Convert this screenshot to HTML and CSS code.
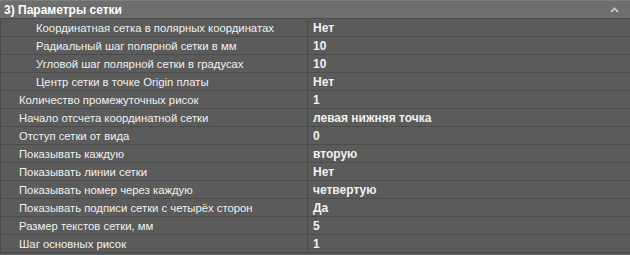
FILE: index.html
```html
<!DOCTYPE html>
<html lang="ru">
<head>
    <meta charset="UTF-8">
    <title>Параметры сетки</title>
    <link rel="stylesheet" href="styles.css">
</head>
<body>
    <div class="panel">
        <div class="group-header">
            <span class="group-title">3) Параметры сетки</span>
            <svg class="collapse" width="9" height="6" viewBox="0 0 9 6"><path d="M1 5 L4.5 1.5 L8 5" fill="none" stroke="#d0d0d0" stroke-width="1.6"/></svg>
        </div>
        <div class="row sub"><div class="name">Координатная сетка в полярных координатах</div><div class="value">Нет</div></div>
        <div class="row sub"><div class="name">Радиальный шаг полярной сетки в мм</div><div class="value">10</div></div>
        <div class="row sub"><div class="name">Угловой шаг полярной сетки в градусах</div><div class="value">10</div></div>
        <div class="row sub"><div class="name">Центр сетки в точке Origin платы</div><div class="value">Нет</div></div>
        <div class="row"><div class="name">Количество промежуточных рисок</div><div class="value">1</div></div>
        <div class="row"><div class="name">Начало отсчета координатной сетки</div><div class="value">левая нижняя точка</div></div>
        <div class="row"><div class="name">Отступ сетки от вида</div><div class="value">0</div></div>
        <div class="row"><div class="name">Показывать каждую</div><div class="value">вторую</div></div>
        <div class="row"><div class="name">Показывать линии сетки</div><div class="value">Нет</div></div>
        <div class="row"><div class="name">Показывать номер через каждую</div><div class="value">четвертую</div></div>
        <div class="row"><div class="name">Показывать подписи сетки с четырёх сторон</div><div class="value">Да</div></div>
        <div class="row"><div class="name">Размер текстов сетки, мм</div><div class="value">5</div></div>
        <div class="row"><div class="name">Шаг основных рисок</div><div class="value">1</div></div>
    </div>
</body>
</html>
```

FILE: styles.css
```css
body {
    margin: 0;
    background-color: #4a4a4a;
    font-family: "Liberation Sans", Arial, sans-serif;
    font-size: 12px;
    color: #f0f0f0;
}

.panel {
    width: 630px;
    height: 255px;
    background-color: #5b5b5b;
    overflow: hidden;
}

.group-header {
    height: 17px;
    display: flex;
    align-items: center;
    justify-content: space-between;
    padding: 0 11px 0 4px;
    background-color: #6e6e6e;
    border-top: 1px solid #7e7e7e;
    border-bottom: 1px solid #4c4c4c;
}

.group-title {
    font-weight: bold;
    color: #ffffff;
}

.row {
    display: flex;
    height: 17px;
    border-bottom: 1px solid #4c4c4c;
    border-left: 1px solid #4c4c4c;
}

.name {
    width: 288px;
    padding-left: 18px;
    font-size: 11.3px;
    line-height: 18px;
    white-space: nowrap;
    border-right: 1px solid #4c4c4c;
}

.sub .name {
    width: 271px;
    padding-left: 35px;
}

.value {
    flex: 1;
    padding-left: 5px;
    line-height: 18px;
    font-weight: bold;
    white-space: nowrap;
}
```
